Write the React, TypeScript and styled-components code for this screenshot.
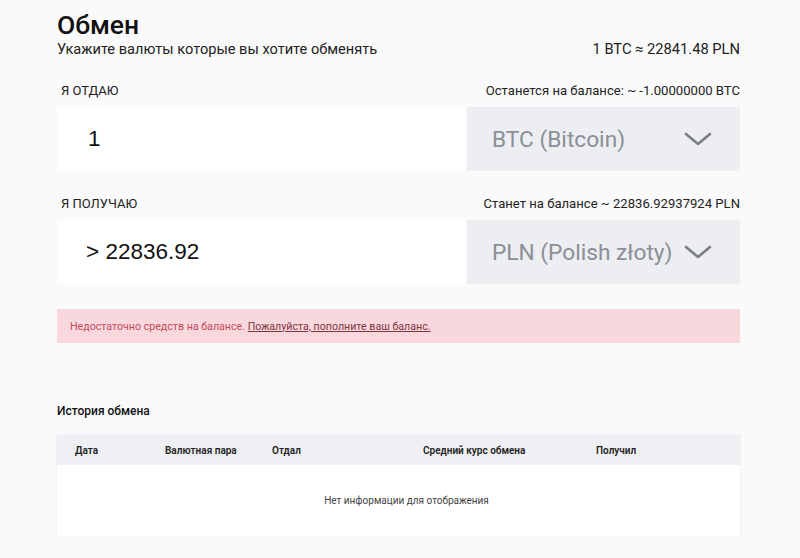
import styled, { createGlobalStyle } from "styled-components";

const GlobalStyle = createGlobalStyle`
    body {
        margin: 0;
        background: #fafafb;
        font-family: Roboto, "Liberation Sans", sans-serif;
        color: #1c1c1e;
    }
`;

const columns = ["Дата", "Валютная пара", "Отдал", "Средний курс обмена", "Получил"];

function Chevron() {
    return (
        <svg width="28" height="14" viewBox="0 0 28 14" fill="none">
            <path d="M2 2 L14 12 L26 2" stroke="#7b7e85" strokeWidth="2.6" strokeLinecap="round" strokeLinejoin="round" />
        </svg>
    );
}

function App() {
    return (
        <>
        <GlobalStyle />
        <Page>
            <Title>Обмен</Title>
            <SubRow>
                <Subtitle>Укажите валюты которые вы хотите обменять</Subtitle>
                <Rate>1 BTC ≈ 22841.48 PLN</Rate>
            </SubRow>

            <LabelRow $top={25}>
                <FieldLabel>Я ОТДАЮ</FieldLabel>
                <Balance>Останется на балансе: ~ -1.00000000 BTC</Balance>
            </LabelRow>
            <ExchangeRow>
                <AmountInput>1</AmountInput>
                <CurrencySelect>
                    <span>BTC (Bitcoin)</span>
                    <Chevron />
                </CurrencySelect>
            </ExchangeRow>

            <LabelRow $top={24}>
                <FieldLabel>Я ПОЛУЧАЮ</FieldLabel>
                <Balance>Станет на балансе ~ 22836.92937924 PLN</Balance>
            </LabelRow>
            <ExchangeRow>
                <AmountInput $shift={-2}>&gt; 22836.92</AmountInput>
                <CurrencySelect>
                    <span>PLN (Polish złoty)</span>
                    <Chevron />
                </CurrencySelect>
            </ExchangeRow>

            <Alert>
                Недостаточно средств на балансе. <AlertLink>Пожалуйста, пополните ваш баланс.</AlertLink>
            </Alert>

            <HistoryTitle>История обмена</HistoryTitle>
            <Table>
                <TableHead>
                    {columns.map((c) => (
                        <HeadCell key={c}>{c}</HeadCell>
                    ))}
                </TableHead>
                <TableBody>Нет информации для отображения</TableBody>
            </Table>
        </Page>
        </>
    );
}

export default App;

const Page = styled.div`
    width: 683px;
    padding: 9px 0 0 57px;
    box-sizing: content-box;
`;

const Title = styled.h1`
    margin: 0;
    font-size: 26.5px;
    line-height: 32px;
    font-weight: 500;
    color: #111;
`;

const SubRow = styled.div`
    display: flex;
    justify-content: space-between;
    align-items: center;
    height: 16px;
`;

const Subtitle = styled.div`
    font-size: 14.6px;
    color: #222;
`;

const Rate = styled.div`
    font-size: 14.7px;
    color: #222;
`;

const LabelRow = styled.div<{ $top: number }>`
    display: flex;
    justify-content: space-between;
    align-items: center;
    height: 16px;
    margin-top: ${({ $top }) => $top}px;
    margin-bottom: 9px;
`;

const FieldLabel = styled.div`
    font-size: 13px;
    padding-left: 4px;
    color: #222;
`;

const Balance = styled.div`
    font-size: 13.1px;
    color: #222;
`;

const ExchangeRow = styled.div`
    display: grid;
    grid-template-columns: 408px 1fr;
    gap: 2px;
    height: 64px;
`;

const AmountInput = styled.div<{ $shift?: number }>`
    background: #ffffff;
    display: flex;
    align-items: center;
    padding-left: ${({ $shift = 0 }) => 31 + $shift}px;
    font-family: "Liberation Sans", Arial, sans-serif;
    font-size: 22.5px;
    color: #111;
`;

const CurrencySelect = styled.div`
    background: #eceef2;
    display: flex;
    align-items: center;
    justify-content: space-between;
    padding: 0 28px 0 25px;
    font-size: 22.7px;
    color: #8b8f97;
`;

const Alert = styled.div`
    margin-top: 25px;
    height: 34px;
    display: flex;
    align-items: center;
    padding-left: 13px;
    background: #f8d8dc;
    font-size: 10.65px;
    color: #c44a5c;
    white-space: pre;
`;

const AlertLink = styled.span`
    color: #7e3540;
    text-decoration: underline;
`;

const HistoryTitle = styled.div`
    margin-top: 60px;
    font-size: 12px;
    font-weight: 500;
    line-height: 16px;
    color: #111;
`;

const Table = styled.div`
    margin-top: 16px;
    background: #ffffff;
    box-shadow: 0 0 0 1px #f2f3f5;
`;

const TableHead = styled.div`
    display: grid;
    grid-template-columns: 90px 107px 151px 173px 1fr;
    align-items: center;
    height: 30px;
    padding-left: 18px;
    background: #eef0f3;
`;

const HeadCell = styled.div`
    font-size: 10px;
    font-weight: 600;
    color: #222;
`;

const TableBody = styled.div`
    height: 71px;
    display: flex;
    align-items: center;
    justify-content: center;
    padding-left: 16px;
    font-size: 10px;
    color: #444;
`;
